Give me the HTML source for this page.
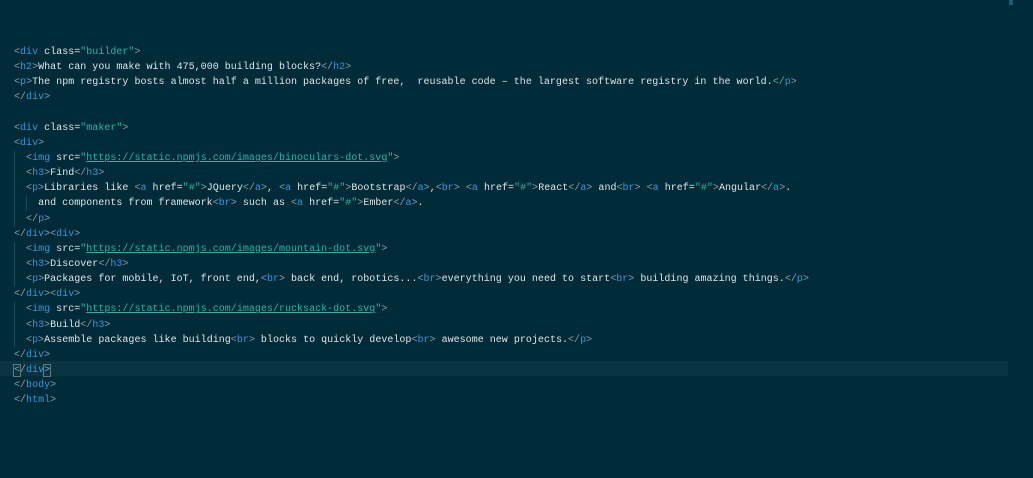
<!DOCTYPE html>
<html><head><style>
body{margin:0;width:1033px;height:478px;background:#022b3a;overflow:hidden;font-family:"Liberation Mono",monospace;font-size:10px;color:#dde4e6}
.c{position:absolute;left:14px;top:45px;letter-spacing:0.02px}
.l{height:15.15px;line-height:15.15px;white-space:pre;position:relative}
.t{color:#3a95dd}.p{color:#8a9ea6}.s{color:#2fb3a3}.u{color:#2fb3a3;text-decoration:underline}
.g{position:absolute;left:1px;width:1px;background:#1d4a58}
.hl{position:absolute;left:0;top:361px;width:1008px;height:15px;background:#0b3442}
.cur{outline:1px solid #5d7a80}
</style></head><body>
<div class="hl"></div>
<div style="position:absolute;left:1009px;top:0;width:4px;height:5px;background:#1d5a78"></div>
<div class="g" style="left:14px;top:151px;height:76px"></div>
<div class="g" style="left:14px;top:242px;height:45px"></div>
<div class="g" style="left:14px;top:302px;height:45px"></div>
<div class="g" style="left:26px;top:196px;height:15px"></div>
<div class="c">
<div class="l"><span class="p">&lt;</span><span class="t">div</span> class=<span class="s">"builder"</span><span class="p">&gt;</span></div>
<div class="l"><span class="p">&lt;</span><span class="t">h2</span><span class="p">&gt;</span>What can you make with 475,000 building blocks?<span class="p">&lt;/</span><span class="t">h2</span><span class="p">&gt;</span></div>
<div class="l"><span class="p">&lt;</span><span class="t">p</span><span class="p">&gt;</span>The npm registry bosts almost half a million packages of free,  reusable code – the largest software registry in the world.<span class="p">&lt;/</span><span class="t">p</span><span class="p">&gt;</span></div>
<div class="l"><span class="p">&lt;/</span><span class="t">div</span><span class="p">&gt;</span></div>
<div class="l"> </div>
<div class="l"><span class="p">&lt;</span><span class="t">div</span> class=<span class="s">"maker"</span><span class="p">&gt;</span></div>
<div class="l"><span class="p">&lt;</span><span class="t">div</span><span class="p">&gt;</span></div>
<div class="l">  <span class="p">&lt;</span><span class="t">img</span> src=<span class="s">"</span><span class="u">https://static.npmjs.com/images/binoculars-dot.svg</span><span class="s">"</span><span class="p">&gt;</span></div>
<div class="l">  <span class="p">&lt;</span><span class="t">h3</span><span class="p">&gt;</span>Find<span class="p">&lt;/</span><span class="t">h3</span><span class="p">&gt;</span></div>
<div class="l">  <span class="p">&lt;</span><span class="t">p</span><span class="p">&gt;</span>Libraries like <span class="p">&lt;</span><span class="t">a</span> href=<span class="s">"#"</span><span class="p">&gt;</span>JQuery<span class="p">&lt;/</span><span class="t">a</span><span class="p">&gt;</span>, <span class="p">&lt;</span><span class="t">a</span> href=<span class="s">"#"</span><span class="p">&gt;</span>Bootstrap<span class="p">&lt;/</span><span class="t">a</span><span class="p">&gt;</span>,<span class="p">&lt;</span><span class="t">br</span><span class="p">&gt;</span> <span class="p">&lt;</span><span class="t">a</span> href=<span class="s">"#"</span><span class="p">&gt;</span>React<span class="p">&lt;/</span><span class="t">a</span><span class="p">&gt;</span> and<span class="p">&lt;</span><span class="t">br</span><span class="p">&gt;</span> <span class="p">&lt;</span><span class="t">a</span> href=<span class="s">"#"</span><span class="p">&gt;</span>Angular<span class="p">&lt;/</span><span class="t">a</span><span class="p">&gt;</span>.</div>
<div class="l">    and components from framework<span class="p">&lt;</span><span class="t">br</span><span class="p">&gt;</span> such as <span class="p">&lt;</span><span class="t">a</span> href=<span class="s">"#"</span><span class="p">&gt;</span>Ember<span class="p">&lt;/</span><span class="t">a</span><span class="p">&gt;</span>.</div>
<div class="l">  <span class="p">&lt;/</span><span class="t">p</span><span class="p">&gt;</span></div>
<div class="l"><span class="p">&lt;/</span><span class="t">div</span><span class="p">&gt;&lt;</span><span class="t">div</span><span class="p">&gt;</span></div>
<div class="l">  <span class="p">&lt;</span><span class="t">img</span> src=<span class="s">"</span><span class="u">https://static.npmjs.com/images/mountain-dot.svg</span><span class="s">"</span><span class="p">&gt;</span></div>
<div class="l">  <span class="p">&lt;</span><span class="t">h3</span><span class="p">&gt;</span>Discover<span class="p">&lt;/</span><span class="t">h3</span><span class="p">&gt;</span></div>
<div class="l">  <span class="p">&lt;</span><span class="t">p</span><span class="p">&gt;</span>Packages for mobile, IoT, front end,<span class="p">&lt;</span><span class="t">br</span><span class="p">&gt;</span> back end, robotics...<span class="p">&lt;</span><span class="t">br</span><span class="p">&gt;</span>everything you need to start<span class="p">&lt;</span><span class="t">br</span><span class="p">&gt;</span> building amazing things.<span class="p">&lt;/</span><span class="t">p</span><span class="p">&gt;</span></div>
<div class="l"><span class="p">&lt;/</span><span class="t">div</span><span class="p">&gt;&lt;</span><span class="t">div</span><span class="p">&gt;</span></div>
<div class="l">  <span class="p">&lt;</span><span class="t">img</span> src=<span class="s">"</span><span class="u">https://static.npmjs.com/images/rucksack-dot.svg</span><span class="s">"</span><span class="p">&gt;</span></div>
<div class="l">  <span class="p">&lt;</span><span class="t">h3</span><span class="p">&gt;</span>Build<span class="p">&lt;/</span><span class="t">h3</span><span class="p">&gt;</span></div>
<div class="l">  <span class="p">&lt;</span><span class="t">p</span><span class="p">&gt;</span>Assemble packages like building<span class="p">&lt;</span><span class="t">br</span><span class="p">&gt;</span> blocks to quickly develop<span class="p">&lt;</span><span class="t">br</span><span class="p">&gt;</span> awesome new projects.<span class="p">&lt;/</span><span class="t">p</span><span class="p">&gt;</span></div>
<div class="l"><span class="p">&lt;/</span><span class="t">div</span><span class="p">&gt;</span></div>
<div class="l"><span class="p cur">&lt;</span><span class="p">/</span><span class="t">div</span><span class="p cur">&gt;</span></div>
<div class="l"><span class="p">&lt;/</span><span class="t">body</span><span class="p">&gt;</span></div>
<div class="l"><span class="p">&lt;/</span><span class="t">html</span><span class="p">&gt;</span></div>
</div>
</body></html>
